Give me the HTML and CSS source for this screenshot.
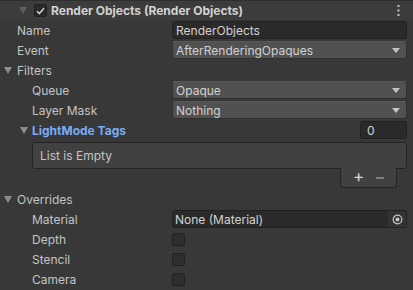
FILE: index.html
```html
<!DOCTYPE html>
<html lang="en">
<head>
    <meta charset="UTF-8">
    <title>Render Objects</title>
    <link rel="stylesheet" href="styles.css">
</head>
<body>
    <div class="inspector">
        <!-- Feature header -->
        <div class="header">
            <span class="fold fold-dim"></span>
            <span class="toggle">
                <svg width="9" height="8" viewBox="0 0 9 8"><path d="M1 4.2 L3.4 6.5 L8 1.2" fill="none" stroke="#e0e0e0" stroke-width="1.3"/></svg>
            </span>
            <span class="title">Render Objects (Render Objects)</span>
            <svg class="kebab" width="3" height="11" viewBox="0 0 3 11"><rect x="0.5" y="0" width="2" height="2" fill="#c4c4c4"/><rect x="0.5" y="4.5" width="2" height="2" fill="#c4c4c4"/><rect x="0.5" y="9" width="2" height="2" fill="#c4c4c4"/></svg>
        </div>

        <div class="row">
            <span class="label">Name</span>
            <div class="field text-field">RenderObjects</div>
        </div>
        <div class="row">
            <span class="label">Event</span>
            <div class="field dropdown">AfterRenderingOpaques<span class="arrow"></span></div>
        </div>

        <!-- Filters -->
        <div class="row foldout">
            <span class="fold"></span>
            <span>Filters</span>
        </div>
        <div class="row indent">
            <span class="label">Queue</span>
            <div class="field dropdown">Opaque<span class="arrow"></span></div>
        </div>
        <div class="row indent">
            <span class="label">Layer Mask</span>
            <div class="field dropdown">Nothing<span class="arrow"></span></div>
        </div>
        <div class="row tags-row">
            <span class="fold"></span>
            <span class="tags-label">LightMode Tags</span>
            <div class="field text-field count">0</div>
        </div>
        <div class="list-box">List is Empty</div>
        <div class="list-footer">
            <span class="plus">+</span>
            <span class="minus"></span>
        </div>

        <!-- Overrides -->
        <div class="row foldout">
            <span class="fold"></span>
            <span>Overrides</span>
        </div>
        <div class="row indent">
            <span class="label">Material</span>
            <div class="field text-field object-field">
                <span class="object-name">None (Material)</span>
                <span class="picker">
                    <svg width="11" height="11" viewBox="0 0 11 11"><circle cx="5.5" cy="5.5" r="4.3" fill="none" stroke="#c4c4c4" stroke-width="1.2"/><circle cx="5.5" cy="5.5" r="2" fill="#c4c4c4"/></svg>
                </span>
            </div>
        </div>
        <div class="row indent">
            <span class="label">Depth</span>
            <span class="checkbox"></span>
        </div>
        <div class="row indent">
            <span class="label">Stencil</span>
            <span class="checkbox"></span>
        </div>
        <div class="row indent">
            <span class="label">Camera</span>
            <span class="checkbox"></span>
        </div>
    </div>
</body>
</html>
```

FILE: styles.css
```css
/* General */
body {
    margin: 0;
    padding: 0;
    background-color: #383838;
    font-family: Inter, "Noto Sans", sans-serif;
    font-size: 12px;
    color: #c4c4c4;
}

.inspector {
    width: 413px;
    height: 290px;
    overflow: hidden;
}

/* Header */
.header {
    display: flex;
    align-items: center;
    height: 20px;
    padding-left: 19px;
    padding-right: 13px;
    background: #3c3c3c;
    border-top: 1px solid #2e2e2e;
    box-sizing: border-box;
}

.toggle {
    display: flex;
    align-items: center;
    justify-content: center;
    width: 11px;
    height: 11px;
    margin-left: 7px;
    background: #2a2a2a;
    border: 1px solid #1f1f1f;
    border-radius: 2px;
}

.title {
    margin-left: 4px;
    font-weight: bold;
    color: #d2d2d2;
    flex: 1;
}

/* Fold arrows */
.fold {
    width: 0;
    height: 0;
    border-left: 4px solid transparent;
    border-right: 4px solid transparent;
    border-top: 7px solid #8c8c8c;
}

.fold-dim {
    border-top-color: #5e5e5e;
}

/* Rows */
.row {
    display: flex;
    align-items: center;
    height: 20px;
    padding-right: 6px;
}

.label {
    width: 172px;
    padding-left: 17px;
    box-sizing: border-box;
    flex-shrink: 0;
}

.indent .label {
    padding-left: 32px;
}

.foldout {
    padding-left: 4px;
}

.foldout .fold {
    margin-right: 5px;
}

.field {
    flex: 1;
    height: 18px;
    box-sizing: border-box;
    display: flex;
    align-items: center;
    padding-left: 3px;
    border-radius: 3px;
    color: #d2d2d2;
    position: relative;
}

.text-field {
    background: #2a2a2a;
    border: 1px solid #212121;
}

.dropdown {
    background: #515151;
    border: 1px solid #303030;
    border-top-color: #585858;
}

.arrow {
    position: absolute;
    right: 6px;
    top: 6px;
    width: 0;
    height: 0;
    border-left: 4px solid transparent;
    border-right: 4px solid transparent;
    border-top: 5px solid #c4c4c4;
}

/* LightMode tags */
.tags-row {
    padding-left: 20px;
}

.tags-row .fold {
    margin-right: 4px;
}

.tags-label {
    font-weight: bold;
    color: #7aabf5;
}

.count {
    flex: 0 0 47px;
    margin-left: auto;
    padding-left: 6px;
}

.list-box {
    height: 27px;
    margin: 2px 6px 0 32px;
    padding-left: 7px;
    display: flex;
    align-items: center;
    background: #414141;
    border: 1px solid #242424;
    border-radius: 3px;
    box-sizing: border-box;
}

.list-footer {
    width: 57px;
    height: 20px;
    margin: -1px 16px 1px auto;
    display: flex;
    align-items: center;
    justify-content: space-around;
    background: #414141;
    border: 1px solid #242424;
    border-top: none;
    border-radius: 0 0 3px 3px;
    box-sizing: border-box;
    padding: 0 6px;
}

.plus {
    font-size: 17px;
    line-height: 1;
    color: #d8d8d8;
    margin-top: -2px;
}

.minus {
    width: 8px;
    height: 2px;
    background: #7c7c7c;
}

/* Object field */
.object-field {
    padding-left: 2px;
    padding-right: 0;
}

.object-name {
    flex: 1;
}

.picker {
    width: 18px;
    height: 16px;
    display: flex;
    align-items: center;
    justify-content: center;
    background: #333333;
    border-radius: 0 2px 2px 0;
}

.checkbox {
    width: 13px;
    height: 13px;
    background: #2e2e2e;
    border: 1px solid #222222;
    border-radius: 2px;
    box-sizing: border-box;
}
```
